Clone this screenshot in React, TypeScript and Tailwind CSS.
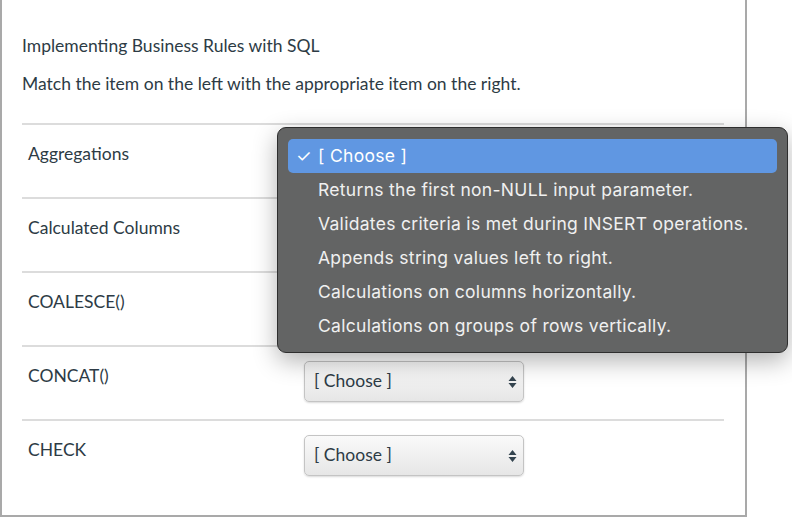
import React from "react";

const rows = ["Aggregations", "Calculated Columns", "COALESCE()", "CONCAT()", "CHECK"];
const opts = [
  "Returns the first non-NULL input parameter.",
  "Validates criteria is met during INSERT operations.",
  "Appends string values left to right.",
  "Calculations on columns horizontally.",
  "Calculations on groups of rows vertically.",
];

function Sel() {
  return (
    <div className="mt-[14px] w-[220px] h-[41px] rounded-[5px] border border-[#c4c4c4] bg-gradient-to-b from-[#fafafa] to-[#e6e6e6] shadow-[0_1px_2px_rgba(0,0,0,0.15)] flex items-center justify-between pl-[9px] pr-[6px] text-[17.5px] text-[#2d3b45]">
      <span>[ Choose ]</span>
      <svg width="9" height="14" viewBox="0 0 9 14"><path d="M4.5 1 L8.5 6 H0.5Z M4.5 13 L8.5 8 H0.5Z" fill="#34444f" /></svg>
    </div>
  );
}

export default function App() {
  return (
    <div className="relative w-[792px] h-[518px] bg-white" style={{ fontFamily: "Lato, 'Open Sans', sans-serif" }}>
      <div className="absolute left-0 top-[-2px] w-[747px] h-[519px] border-2 border-[#a9a9a9] bg-white" />
      <div className="relative w-[746px] pl-[22px] pr-[22px] pt-[34px] text-[#2d3b45]">
        <div className="text-[17.5px] leading-[24px]">Implementing Business Rules with SQL</div>
        <div className="text-[17.5px] leading-[24px] mt-[14px]">Match the item on the left with the appropriate item on the right.</div>
        <div className="mt-[27px]">
          {rows.map((r, i) => (
            <div key={r} className="h-[74px] border-t-2 border-[#dcdcdc] flex items-start">
              <div className="w-[282px] pl-[6px] pt-[17px] leading-[24px] text-[17.5px]">{r}</div>
              {i >= 3 && <Sel />}
            </div>
          ))}
        </div>
      </div>
      <div className="absolute left-[277px] top-[127px] w-[511px] h-[226px] rounded-[9px] bg-[#636464] border border-[#2e2e2e] shadow-[0_8px_24px_rgba(0,0,0,0.3)] px-[10px] pt-[11px] text-[#f0f0f0] text-[17.5px] tracking-[0.3px]" style={{ fontFamily: "Inter, 'Open Sans', sans-serif" }}>
        <div className="h-[34px] rounded-[5px] bg-[#6097e2] flex items-center pl-[8px] text-white">
          <span className="w-[22px]">✓</span>[ Choose ]
        </div>
        {opts.map((o) => (
          <div key={o} className="h-[34px] flex items-center pl-[30px]">{o}</div>
        ))}
      </div>
    </div>
  );
}
